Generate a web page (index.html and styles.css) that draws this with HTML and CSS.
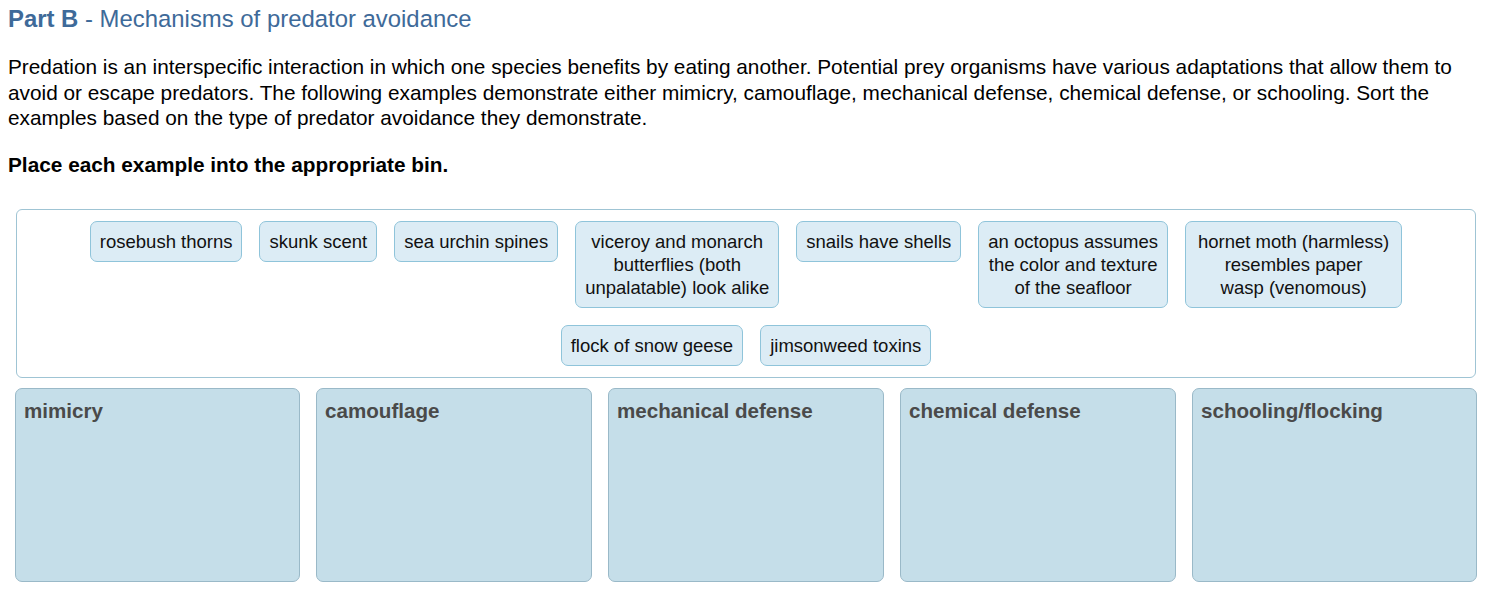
FILE: index.html
```html
<!DOCTYPE html>
<html>
<head>
<meta charset="utf-8">
<link rel="stylesheet" href="styles.css">
</head>
<body>
<div class="page">
  <h2 class="title"><strong>Part B</strong> - Mechanisms of predator avoidance</h2>
  <p class="intro">Predation is an interspecific interaction in which one species benefits by eating another. Potential prey organisms have various adaptations that allow them to avoid or escape predators. The following examples demonstrate either mimicry, camouflage, mechanical defense, chemical defense, or schooling. Sort the examples based on the type of predator avoidance they demonstrate.</p>
  <p class="instruction">Place each example into the appropriate bin.</p>

  <div class="pool">
    <div class="chip">rosebush thorns</div>
    <div class="chip">skunk scent</div>
    <div class="chip">sea urchin spines</div>
    <div class="chip">viceroy and monarch<br>butterflies (both<br>unpalatable) look alike</div>
    <div class="chip">snails have shells</div>
    <div class="chip">an octopus assumes<br>the color and texture<br>of the seafloor</div>
    <div class="chip chip-wide">hornet moth (harmless)<br>resembles paper<br>wasp (venomous)</div>
    <div class="chip">flock of snow geese</div>
    <div class="chip">jimsonweed toxins</div>
  </div>

  <div class="bins">
    <div class="bin"><div class="bin-label">mimicry</div></div>
    <div class="bin"><div class="bin-label">camouflage</div></div>
    <div class="bin"><div class="bin-label">mechanical defense</div></div>
    <div class="bin"><div class="bin-label">chemical defense</div></div>
    <div class="bin"><div class="bin-label">schooling/flocking</div></div>
  </div>
</div>
</body>
</html>
```

FILE: styles.css
```css
html, body {
  margin: 0;
  padding: 0;
  background: #ffffff;
}
body {
  font-family: "Liberation Sans", Arial, sans-serif;
  color: #000;
}
.page {
  padding: 4px 8px 0 8px;
}
.title {
  margin: 0;
  font-size: 23.9px;
  font-weight: normal;
  color: #3e6a99;
  line-height: 30px;
}
.title strong {
  font-weight: bold;
}
.intro {
  margin: 20px 0 0 0;
  font-size: 20.8px;
  line-height: 25.5px;
}
.instruction {
  margin: 21px 0 0 0;
  font-size: 20.8px;
  line-height: 25px;
  font-weight: bold;
}
.pool {
  width: 1434px;
  margin: 32px 0 0 8px;
  border: 1px solid #9fc4d4;
  border-radius: 6px;
  padding: 11px 12px;
  display: flex;
  flex-wrap: wrap;
  justify-content: center;
  align-items: flex-start;
  gap: 17px 17px;
}
.chip {
  background: #dcecf5;
  border: 1px solid #8fc4da;
  border-radius: 7px;
  padding: 8px 9px;
  font-size: 18.5px;
  line-height: 23px;
  text-align: center;
  color: #111;
}
.chip-wide {
  padding-left: 12px;
  padding-right: 12px;
}
.bins {
  margin: 10px 0 0 7px;
  display: grid;
  grid-template-columns: 285px 276px 276px 276px 285px;
  gap: 16px;
}
.bin {
  box-sizing: border-box;
  height: 194px;
  background: #c5dee9;
  border: 1px solid #9ab9c8;
  border-radius: 7px;
  padding: 10px 8px;
}
.bin-label {
  font-size: 20.6px;
  font-weight: bold;
  color: #4a4a4a;
  line-height: 24px;
}
```
